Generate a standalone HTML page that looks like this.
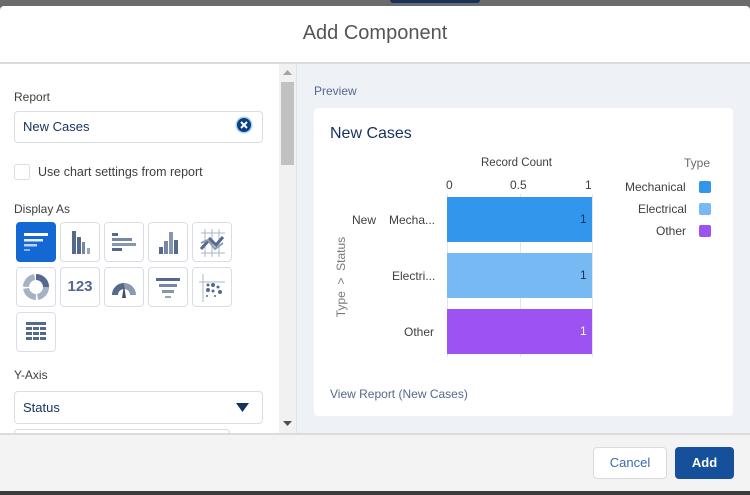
<!DOCTYPE html>
<html><head><meta charset="utf-8"><style>
*{box-sizing:border-box;margin:0;padding:0}
body{width:750px;height:495px;overflow:hidden;font-family:"Liberation Sans",sans-serif;background:#6b6b6b;position:relative}
.abs{position:absolute}
.t{color:#3e3e3c;font-size:12px}
</style></head><body>
<div class="abs" style="left:0;top:0;width:750px;height:6px;background:#6b6b6b"></div>
<div class="abs" style="left:390px;top:0;width:90px;height:3px;background:#16325c;border-radius:0 0 3px 3px"></div>
<div class="abs" style="left:0;top:6px;width:750px;height:486px;background:#fff;border-radius:4px 4px 0 0"></div>
<div class="abs" style="left:0;top:22px;width:750px;text-align:center;font-size:20px;color:#555;font-weight:300">Add Component</div>
<div class="abs" style="left:0;top:62px;width:750px;height:2px;background:#dddbda"></div>
<!-- left panel -->
<div class="abs t" style="left:14px;top:90px">Report</div>
<div class="abs" style="left:14px;top:111px;width:249px;height:32px;border:1px solid #d8dde6;border-radius:4px"></div>
<div class="abs" style="left:23px;top:119px;font-size:13px;color:#16325c">New Cases</div>
<svg class="abs" style="left:235px;top:116px" width="18" height="18" viewBox="0 0 18 18"><circle cx="9" cy="9" r="8.5" fill="#a8d3f5"/><circle cx="9" cy="9" r="7" fill="#0b3f85"/><path d="M6 6L12 12M12 6L6 12" stroke="#fff" stroke-width="2"/></svg>
<div class="abs" style="left:14px;top:164px;width:16px;height:16px;border:1px solid #d8dde6;border-radius:3px"></div>
<div class="abs" style="left:38px;top:165px;font-size:12.5px;color:#3e3e3c">Use chart settings from report</div>
<div class="abs t" style="left:14px;top:202px">Display As</div>
<!-- tiles -->
<div class="abs" style="left:16px;top:222px;width:40px;height:40px;background:#1468d4;border-radius:4px"><svg width="40" height="40"><g fill="#fff"><rect x="8" y="11" width="24" height="3"/><rect x="8" y="17" width="19" height="2.5" opacity=".9"/><rect x="8" y="22" width="13" height="2.5" opacity=".7"/><rect x="8" y="27" width="6" height="2" opacity=".5"/></g></svg></div>
<div class="abs" style="left:60px;top:222px;width:40px;height:40px;border:1px solid #d8dde6;border-radius:4px"><svg width="38" height="38"><g fill="#54698d"><rect x="11" y="8" width="4" height="23"/><rect x="16" y="14" width="4" height="17"/><rect x="21" y="19" width="3" height="12" opacity=".8"/><rect x="26" y="25" width="3" height="6" opacity=".6"/></g></svg></div>
<div class="abs" style="left:104px;top:222px;width:40px;height:40px;border:1px solid #d8dde6;border-radius:4px"><svg width="38" height="38"><g fill="#54698d"><rect x="7" y="10" width="6" height="3"/><rect x="7" y="15" width="20" height="3" opacity=".8"/><rect x="7" y="20" width="24" height="3" opacity=".7"/><rect x="7" y="25" width="10" height="3"/></g></svg></div>
<div class="abs" style="left:148px;top:222px;width:40px;height:40px;border:1px solid #d8dde6;border-radius:4px"><svg width="38" height="38"><g fill="#54698d"><rect x="10" y="24" width="4" height="7"/><rect x="15" y="18" width="4" height="13" opacity=".8"/><rect x="20" y="9" width="4" height="22" opacity=".7"/><rect x="25" y="17" width="4" height="14"/></g></svg></div>
<div class="abs" style="left:192px;top:222px;width:40px;height:40px;border:1px solid #d8dde6;border-radius:4px"><svg width="38" height="38"><g stroke="#a8b7c7" stroke-width="1"><path d="M8 10H32M8 30H32M12 6V34M19 6V34M26 6V34"/></g><path d="M8 26L17 16L23 22L30 14" stroke="#54698d" stroke-width="3" fill="none"/><path d="M8 20L15 17L22 26L30 20" stroke="#8a9bb0" stroke-width="2" fill="none"/></svg></div>
<div class="abs" style="left:16px;top:267px;width:40px;height:40px;border:1px solid #d8dde6;border-radius:4px"><svg width="38" height="38"><circle cx="19" cy="19" r="10" fill="none" stroke="#a3b2c4" stroke-width="6" stroke-dasharray="14 1.7"/><path d="M19 9A10 10 0 0 1 29 19" stroke="#54698d" stroke-width="6" fill="none"/></svg></div>
<div class="abs" style="left:60px;top:267px;width:40px;height:40px;border:1px solid #d8dde6;border-radius:4px;font-weight:bold;color:#54698d;font-size:15px;text-align:center;line-height:38px">123</div>
<div class="abs" style="left:104px;top:267px;width:40px;height:40px;border:1px solid #d8dde6;border-radius:4px"><svg width="38" height="38"><path d="M7 27A12 12 0 0 1 31 27H25A6 6 0 0 0 13 27Z" fill="#8a9bb0"/><path d="M7 27A12 12 0 0 1 19 15V21A6 6 0 0 0 13 27Z" fill="#54698d"/><path d="M17 30L19 17L21 30Z" fill="#3e4f6b"/></svg></div>
<div class="abs" style="left:148px;top:267px;width:40px;height:40px;border:1px solid #d8dde6;border-radius:4px"><svg width="38" height="38"><g fill="#54698d"><rect x="7" y="10" width="24" height="3"/><rect x="10" y="16" width="18" height="3" opacity=".8"/><rect x="13" y="22" width="12" height="3" opacity=".7"/><rect x="16" y="28" width="6" height="2" opacity=".6"/></g></svg></div>
<div class="abs" style="left:192px;top:267px;width:40px;height:40px;border:1px solid #d8dde6;border-radius:4px"><svg width="38" height="38"><g stroke="#a8b7c7"><path d="M10 6V34M6 14H32"/></g><g fill="#54698d"><circle cx="15" cy="17" r="1.5"/><circle cx="20" cy="17" r="2"/><circle cx="25" cy="19" r="1.5"/><circle cx="15" cy="22" r="2"/><circle cx="20" cy="23" r="1.5"/><circle cx="27" cy="24" r="2"/><circle cx="14" cy="28" r="1"/><circle cx="22" cy="28" r="1"/></g></svg></div>
<div class="abs" style="left:16px;top:312px;width:40px;height:40px;border:1px solid #d8dde6;border-radius:4px"><svg width="38" height="38"><g fill="#54698d"><rect x="9" y="9" width="20" height="3"/><rect x="9" y="14" width="6" height="3"/><rect x="16" y="14" width="6" height="3"/><rect x="23" y="14" width="6" height="3"/><rect x="9" y="19" width="6" height="3"/><rect x="16" y="19" width="6" height="3"/><rect x="23" y="19" width="6" height="3"/><rect x="9" y="24" width="6" height="3"/><rect x="16" y="24" width="6" height="3"/><rect x="23" y="24" width="6" height="3"/></g></svg></div>
<div class="abs t" style="left:14px;top:368px">Y-Axis</div>
<div class="abs" style="left:14px;top:391px;width:249px;height:33px;border:1px solid #d8dde6;border-radius:4px"></div>
<div class="abs" style="left:23px;top:400px;font-size:13px;color:#16325c">Status</div>
<svg class="abs" style="left:236px;top:403px" width="13" height="9"><path d="M0 0H13L6.5 9Z" fill="#16325c"/></svg>
<div class="abs" style="left:14px;top:429px;width:216px;height:6px;border:1px solid #d8dde6;border-bottom:none;border-radius:4px 4px 0 0"></div>
<!-- scrollbar -->
<div class="abs" style="left:279px;top:64px;width:17px;height:370px;background:#f1f1f1"></div>
<div class="abs" style="left:281px;top:82px;width:13px;height:83px;background:#c1c1c1"></div>
<svg class="abs" style="left:283px;top:70px" width="9" height="6"><path d="M0 5H9L4.5 0Z" fill="#a3a3a3"/></svg>
<svg class="abs" style="left:283px;top:421px" width="9" height="6"><path d="M0 0H9L4.5 5Z" fill="#505050"/></svg>
<!-- right -->
<div class="abs" style="left:296px;top:64px;width:454px;height:370px;background:#eef1f6;border-left:1px solid #dde4ee"></div>
<div class="abs" style="left:314px;top:84px;font-size:12px;color:#54698d">Preview</div>
<div class="abs" style="left:314px;top:108px;width:419px;height:308px;background:#fff;border-radius:4px"></div>
<div class="abs" style="left:330px;top:125px;font-size:16px;color:#16325c">New Cases</div>
<div class="abs" style="left:481px;top:157px;font-size:11.5px;color:#3e3e3c">Record Count</div>
<div class="abs" style="left:446px;top:178px;font-size:12px;color:#3e3e3c">0</div>
<div class="abs" style="left:510px;top:178px;font-size:12px;color:#3e3e3c">0.5</div>
<div class="abs" style="left:585px;top:178px;font-size:12px;color:#3e3e3c">1</div>
<div class="abs" style="left:447px;top:194px;width:1px;height:163px;background:#e0e5ee"></div>
<div class="abs" style="left:520px;top:194px;width:1px;height:163px;background:#e0e5ee"></div>
<div class="abs" style="left:592px;top:194px;width:1px;height:163px;background:#e0e5ee"></div>
<div class="abs" style="left:447px;top:197px;width:145px;height:45px;background:#3296ed"></div>
<div class="abs" style="left:447px;top:253px;width:145px;height:45px;background:#77b9f2"></div>
<div class="abs" style="left:447px;top:309px;width:145px;height:45px;background:#9d53f2"></div>
<div class="abs" style="left:580px;top:212px;font-size:12px;color:#16325c">1</div>
<div class="abs" style="left:580px;top:268px;font-size:12px;color:#16325c">1</div>
<div class="abs" style="left:580px;top:324px;font-size:12px;color:#fff">1</div>
<div class="abs" style="left:352px;top:213px;font-size:12px;color:#3e3e3c">New</div>
<div class="abs" style="left:389px;top:213px;font-size:12px;color:#3e3e3c">Mecha...</div>
<div class="abs" style="left:392px;top:269px;font-size:12px;color:#3e3e3c">Electri...</div>
<div class="abs" style="left:404px;top:325px;font-size:12px;color:#3e3e3c">Other</div>
<div class="abs" style="left:291px;top:270px;width:100px;transform:rotate(-90deg);text-align:center;font-size:12px;color:#7a7a7a;white-space:nowrap">Type &nbsp;&gt;&nbsp; Status</div>
<div class="abs" style="left:684px;top:156px;font-size:12px;color:#6b6b6b">Type</div>
<div class="abs" style="left:625px;top:180px;font-size:12px;color:#3e3e3c">Mechanical</div>
<div class="abs" style="left:638px;top:202px;font-size:12px;color:#3e3e3c">Electrical</div>
<div class="abs" style="left:656px;top:224px;font-size:12px;color:#3e3e3c">Other</div>
<div class="abs" style="left:699px;top:181px;width:12px;height:12px;border-radius:2px;background:#3296ed"></div>
<div class="abs" style="left:699px;top:203px;width:12px;height:12px;border-radius:2px;background:#77b9f2"></div>
<div class="abs" style="left:699px;top:225px;width:12px;height:12px;border-radius:2px;background:#9d53f2"></div>
<div class="abs" style="left:330px;top:387px;font-size:12px;color:#54698d">View Report (New Cases)</div>
<!-- footer -->
<div class="abs" style="left:0;top:433px;width:750px;height:58px;background:#f3f3f3;border-top:2px solid #dddbda"></div>
<div class="abs" style="left:593px;top:447px;width:74px;height:32px;background:#fff;border:1px solid #dddbda;border-radius:4px;color:#3a6ab0;font-size:13px;text-align:center;line-height:30px">Cancel</div>
<div class="abs" style="left:675px;top:447px;width:59px;height:32px;background:#16509a;border-radius:4px;color:#fff;font-size:13px;font-weight:bold;text-align:center;line-height:32px">Add</div>
<div class="abs" style="left:0;top:491px;width:750px;height:4px;background:#3c3c3c"></div>
</body></html>
